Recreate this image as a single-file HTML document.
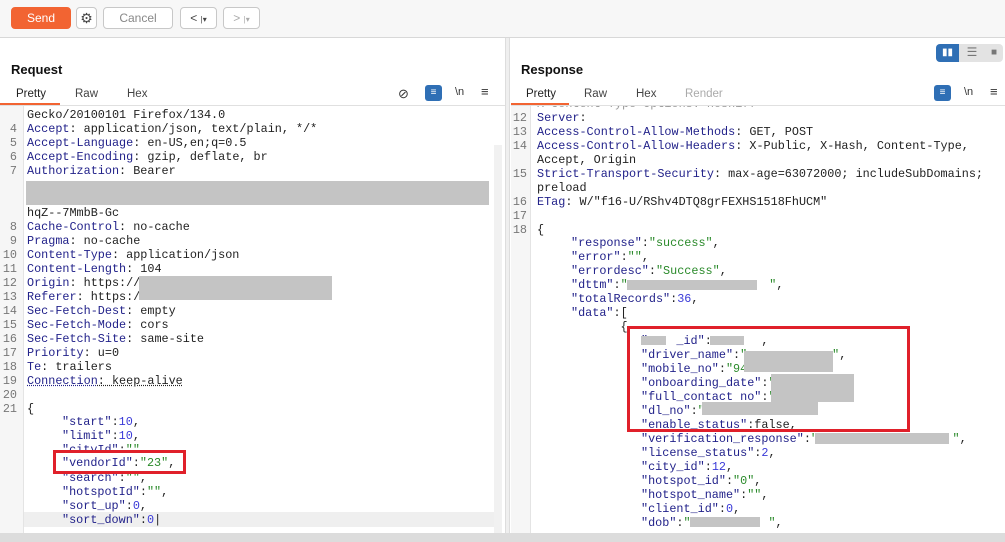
<!DOCTYPE html>
<html><head><meta charset="utf-8"><style>
*{margin:0;padding:0;box-sizing:border-box}
body{width:1005px;height:542px;overflow:hidden;background:#fff;font-family:"Liberation Sans",sans-serif;position:relative}
.a{position:absolute}
.tb{left:0;top:0;width:1005px;height:38px;background:#f7f7f7;border-bottom:1px solid #d8d8d8}
.btn{position:absolute;border:1px solid #c8c8c8;border-radius:4px;background:#fff;font-size:12px;color:#888;text-align:center;line-height:20px;height:22px;top:7px}
.code{font-family:"Liberation Mono",monospace;font-size:11.8px;color:#222;white-space:pre;line-height:14px;position:absolute}
.k{color:#22228a}.s{color:#2a8a2a}.n{color:#3a3ad8}
.ln{font-family:"Liberation Mono",monospace;font-size:11.8px;color:#777;position:absolute;line-height:14px;text-align:right;width:17px;white-space:pre}
.red{background:#c4c4c4;position:absolute}
.h{font-weight:bold;font-size:13px;color:#111;position:absolute}
.tab{position:absolute;font-size:11.5px;color:#444}
</style></head><body>
<div class="a tb"></div>
<div class="btn" style="left:11px;width:60px;background:#f26432;border-color:#f26432;color:#fff">Send</div>
<div class="btn" style="left:76px;width:21px;color:#444;font-size:14px">⚙</div>
<div class="btn" style="left:103px;width:70px">Cancel</div>
<div class="btn" style="left:180px;width:37px;color:#444">&lt; <span style="font-size:8px">|▾</span></div>
<div class="btn" style="left:223px;width:37px;color:#aaa">&gt; <span style="font-size:8px">|▾</span></div>

<div class="a" style="left:505px;top:38px;width:5px;height:504px;background:#efefef;border-left:1px solid #ddd;border-right:1px solid #ddd"></div>

<div class="a" style="left:936px;top:44px;width:67px;height:18px;border-radius:4px;background:#e3e3e3"></div>
<div class="a" style="left:936px;top:44px;width:23px;height:18px;border-radius:4px 0 0 4px;background:#2f6fb5;color:#fff;font-size:10px;text-align:center;line-height:18px">▮▮</div>
<div class="a" style="left:962px;top:44px;width:20px;height:18px;color:#777;font-size:12px;text-align:center;line-height:17px">☰</div>
<div class="a" style="left:985px;top:44px;width:18px;height:18px;color:#777;font-size:10px;text-align:center;line-height:18px">■</div>

<div class="h" style="left:11px;top:62px">Request</div>
<div class="h" style="left:521px;top:62px">Response</div>

<div class="tab" style="left:16px;top:88px;color:#222">Pretty</div>
<div class="tab" style="left:75px;top:88px">Raw</div>
<div class="tab" style="left:127px;top:88px">Hex</div>
<div class="a" style="left:0;top:103px;width:60px;height:2px;background:#f26432"></div>
<div class="a" style="left:0;top:105px;width:505px;height:1px;background:#e0e0e0"></div>
<div class="a" style="left:398px;top:86px;font-size:13px;color:#333">⊘</div>
<div class="a" style="left:425px;top:85px;width:17px;height:16px;border-radius:3px;background:#2f6fb5;color:#fff;font-size:10px;text-align:center;line-height:16px">≡</div>
<div class="a" style="left:455px;top:86px;font-size:11px;color:#333">\n</div>
<div class="a" style="left:481px;top:84px;font-size:13px;color:#333">≡</div>

<div class="tab" style="left:526px;top:88px;color:#222">Pretty</div>
<div class="tab" style="left:584px;top:88px">Raw</div>
<div class="tab" style="left:636px;top:88px">Hex</div>
<div class="tab" style="left:685px;top:88px;color:#aaa">Render</div>
<div class="a" style="left:511px;top:103px;width:58px;height:2px;background:#f26432"></div>
<div class="a" style="left:511px;top:105px;width:494px;height:1px;background:#e0e0e0"></div>
<div class="a" style="left:934px;top:85px;width:17px;height:16px;border-radius:3px;background:#2f6fb5;color:#fff;font-size:10px;text-align:center;line-height:16px">≡</div>
<div class="a" style="left:964px;top:86px;font-size:11px;color:#333">\n</div>
<div class="a" style="left:990px;top:84px;font-size:13px;color:#333">≡</div>

<div class="a" style="left:0;top:106px;width:24px;height:428px;background:#f6f6f6;border-right:1px solid #e4e4e4"></div>
<div class="a" style="left:494px;top:145px;width:8px;height:389px;background:#f1f1f1"></div>

<div class="ln" style="left:0;top:122px">4
5
6
7</div>
<div class="code" style="left:27px;top:108px">Gecko/20100101 Firefox/134.0
<span class="k">Accept</span>: application/json, text/plain, */*
<span class="k">Accept-Language</span>: en-US,en;q=0.5
<span class="k">Accept-Encoding</span>: gzip, deflate, br
<span class="k">Authorization</span>: Bearer</div>
<div class="red" style="left:26px;top:181px;width:463px;height:24px"></div>
<div class="code" style="left:27px;top:206px">hqZ--7MmbB-Gc</div>
<div class="ln" style="left:0;top:220px">8
9
10
11
12
13
14
15
16
17
18
19
20
21</div>
<div class="code" style="left:27px;top:220px"><span class="k">Cache-Control</span>: no-cache
<span class="k">Pragma</span>: no-cache
<span class="k">Content-Type</span>: application/json
<span class="k">Content-Length</span>: 104
<span class="k">Origin</span>: https://
<span class="k">Referer</span>: https:/
<span class="k">Sec-Fetch-Dest</span>: empty
<span class="k">Sec-Fetch-Mode</span>: cors
<span class="k">Sec-Fetch-Site</span>: same-site
<span class="k">Priority</span>: u=0
<span class="k">Te</span>: trailers
<span class="k" style="text-decoration:underline dotted">Connection</span><span style="text-decoration:underline dotted">: keep-alive</span>

{</div>
<div class="red" style="left:139px;top:276px;width:193px;height:24px"></div>
<div class="a" style="left:24px;top:512px;width:470px;height:15px;background:#efefef"></div>
<div class="code" style="left:62px;top:415px"><span class="k">"start"</span>:<span class="n">10</span>,
<span class="k">"limit"</span>:<span class="n">10</span>,
<span class="k">"cityId"</span>:<span class="s">""</span>,
<span class="k">"vendorId"</span>:<span class="s">"23"</span>,
<span class="k">"search"</span>:<span class="s">""</span>,
<span class="k">"hotspotId"</span>:<span class="s">""</span>,
<span class="k">"sort_up"</span>:<span class="n">0</span>,
<span class="k">"sort_down"</span>:<span class="n">0</span>|</div>
<div class="a" style="left:53px;top:450px;width:133px;height:24px;border:3px solid #e0202a;background:#fff"></div>
<div class="code" style="left:62px;top:456px"><span class="k">"vendorId"</span>:<span class="s">"23"</span>,</div>

<div class="a" style="left:511px;top:106px;width:20px;height:428px;background:#f6f6f6;border-right:1px solid #e4e4e4"></div>
<div class="ln" style="left:510px;top:111px">12
13
14

15

16
17
18</div>
<div class="a" style="left:531px;top:106px;width:300px;height:5px;overflow:hidden"><div class="code" style="left:6px;top:-9px;color:#999">X-Content-Type-Options: nosniff</div></div>
<div class="code" style="left:537px;top:111px"><span class="k">Server</span>:
<span class="k">Access-Control-Allow-Methods</span>: GET, POST
<span class="k">Access-Control-Allow-Headers</span>: X-Public, X-Hash, Content-Type,
Accept, Origin
<span class="k">Strict-Transport-Security</span>: max-age=63072000; includeSubDomains;
preload
<span class="k">ETag</span>: W/"f16-U/RShv4DTQ8grFEXHS1518FhUCM"

{</div>
<div class="code" style="left:571px;top:236px"><span class="k">"response"</span>:<span class="s">"success"</span>,
<span class="k">"error"</span>:<span class="s">""</span>,
<span class="k">"errordesc"</span>:<span class="s">"Success"</span>,
<span class="k">"dttm"</span>:<span class="s">"                    "</span>,
<span class="k">"totalRecords"</span>:<span class="n">36</span>,
<span class="k">"data"</span>:[
       {</div>
<div class="red" style="left:627px;top:280px;width:130px;height:10px"></div>
<div class="code" style="left:641px;top:334px"><span class="k">"    _id"</span>:       ,
<span class="k">"driver_name"</span>:<span class="s">"            "</span>,
<span class="k">"mobile_no"</span>:<span class="s">"94</span>
<span class="k">"onboarding_date"</span>:<span class="s">"</span>
<span class="k">"full_contact no"</span>:<span class="s">"</span>
<span class="k">"dl_no"</span>:<span class="s">"</span>
<span class="k">"enable_status"</span>:false,
<span class="k">"verification_response"</span>:<span class="s">"                   "</span>,
<span class="k">"license_status"</span>:<span class="n">2</span>,
<span class="k">"city_id"</span>:<span class="n">12</span>,
<span class="k">"hotspot_id"</span>:<span class="s">"0"</span>,
<span class="k">"hotspot_name"</span>:<span class="s">""</span>,
<span class="k">"client_id"</span>:<span class="n">0</span>,
<span class="k">"dob"</span>:<span class="s">"           "</span>,</div>
<div class="red" style="left:641px;top:336px;width:25px;height:9px"></div>
<div class="red" style="left:710px;top:336px;width:34px;height:9px"></div>
<div class="red" style="left:744px;top:351px;width:89px;height:21px"></div>
<div class="red" style="left:771px;top:374px;width:83px;height:28px"></div>
<div class="red" style="left:702px;top:402px;width:116px;height:13px"></div>
<div class="red" style="left:815px;top:433px;width:134px;height:11px"></div>
<div class="red" style="left:690px;top:517px;width:70px;height:10px"></div>
<div class="a" style="left:627px;top:326px;width:283px;height:106px;border:3px solid #e0202a"></div>

<div class="a" style="left:0;top:533px;width:1005px;height:9px;background:#dcdcdc"></div>
</body></html>
